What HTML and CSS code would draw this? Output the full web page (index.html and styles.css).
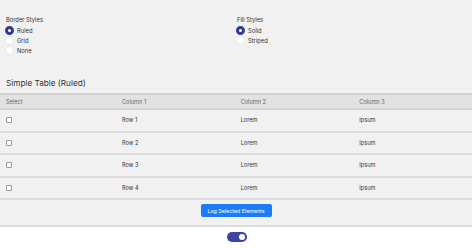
FILE: index.html
```html
<!DOCTYPE html>
<html lang="en">
<head>
    <meta charset="UTF-8">
    <title>Simple Table</title>
    <link rel="stylesheet" href="styles.css">
</head>
<body>
    <div class="panel">
        <div class="options">
            <div class="group">
                <p class="label">Border Styles</p>
                <label class="radio"><span class="dot on"></span>Ruled</label>
                <label class="radio"><span class="dot"></span>Grid</label>
                <label class="radio"><span class="dot"></span>None</label>
            </div>
            <div class="group">
                <p class="label">Fill Styles</p>
                <label class="radio"><span class="dot on"></span>Solid</label>
                <label class="radio"><span class="dot"></span>Striped</label>
            </div>
        </div>
        <h2 class="title">Simple Table (Ruled)</h2>
        <table class="grid">
            <thead>
                <tr><th class="sel">Select</th><th>Column 1</th><th>Column 2</th><th>Column 3</th></tr>
            </thead>
            <tbody>
                <tr><td><span class="box"></span></td><td>Row 1</td><td>Lorem</td><td>Ipsum</td></tr>
                <tr><td><span class="box"></span></td><td>Row 2</td><td>Lorem</td><td>Ipsum</td></tr>
                <tr><td><span class="box"></span></td><td>Row 3</td><td>Lorem</td><td>Ipsum</td></tr>
                <tr><td><span class="box"></span></td><td>Row 4</td><td>Lorem</td><td>Ipsum</td></tr>
            </tbody>
        </table>
        <div class="actions">
            <button class="log">Log Selected Elements</button>
        </div>
    </div>
    <div class="footer">
        <span class="toggle"><span class="knob"></span></span>
    </div>
</body>
</html>
```
FILE: styles.css
```css
*{
    margin: 0px;
    padding: 0px;
    box-sizing: border-box;
}
body{
    font-family: Inter, "Noto Sans", sans-serif;
    color: #333;
    background: #fff;
    width: 474px;
}
.panel{
    background: #f1f1f1;
    width: 472px;
}
.options{
    display: grid;
    grid-template-columns: 231px 1fr;
    padding: 15px 6px 0px 5px;
    height: 76px;
}
.label{
    font-size: 5.8px;
    line-height: 9px;
    margin-bottom: 2px;
    padding-left: 1px;
}
.radio{
    display: flex;
    align-items: center;
    gap: 3px;
    font-size: 5.8px;
    height: 9.7px;
}
.dot{
    width: 9px;
    height: 9px;
    border-radius: 50%;
    background: #fff;
    border: 1px solid #e8e8e8;
}
.dot.on{
    background: #fff;
    border: 3px solid #2f3b8f;
}
.title{
    font-size: 8.2px;
    font-weight: 400;
    padding: 0px 6px;
    line-height: 14px;
    margin-bottom: 3px;
}
.grid{
    width: 472px;
    border-collapse: collapse;
    table-layout: fixed;
    font-size: 5.6px;
}
.grid th{
    background: #e2e2e2;
    color: #666;
    font-weight: 400;
    text-align: left;
    padding: 0px 6px;
    height: 15px;
    border-top: 2px solid #d2d2d2;
    border-bottom: 2px solid #d2d2d2;
}
.grid th.sel{
    width: 116px;
}
.grid td{
    text-align: left;
    padding: 0px 6px;
    height: 22.5px;
    border-bottom: 2px solid #dcdcdc;
}
.box{
    display: block;
    width: 6px;
    height: 6px;
    border: 1px solid #999;
    border-radius: 1px;
    background: #fff;
}
.actions{
    display: flex;
    justify-content: center;
    padding: 4px 0px 8px 0px;
    border-bottom: 2px solid #dcdcdc;
}
.log{
    background: #1a7cf6;
    color: #fff;
    border: none;
    border-radius: 2px;
    font-family: Inter, "Noto Sans", sans-serif;
    font-size: 5.3px;
    width: 71px;
    height: 13px;
}
.footer{
    display: flex;
    justify-content: center;
    padding-top: 5px;
}
.toggle{
    display: flex;
    justify-content: flex-end;
    align-items: center;
    width: 20px;
    height: 10px;
    border-radius: 5px;
    background: #3a44a3;
    padding: 2px;
}
.knob{
    width: 6px;
    height: 6px;
    border-radius: 50%;
    background: #fff;
}
```
